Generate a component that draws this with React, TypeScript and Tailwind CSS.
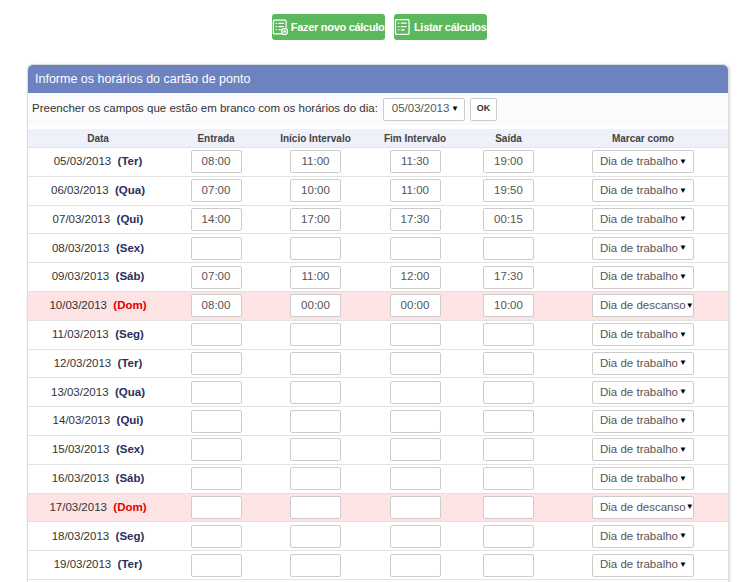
const rows: [string,string,string[],boolean][] = [
["05/03/2013","Ter",["08:00","11:00","11:30","19:00"],false],
["06/03/2013","Qua",["07:00","10:00","11:00","19:50"],false],
["07/03/2013","Qui",["14:00","17:00","17:30","00:15"],false],
["08/03/2013","Sex",["","","",""],false],
["09/03/2013","Sáb",["07:00","11:00","12:00","17:30"],false],
["10/03/2013","Dom",["08:00","00:00","00:00","10:00"],true],
["11/03/2013","Seg",["","","",""],false],
["12/03/2013","Ter",["","","",""],false],
["13/03/2013","Qua",["","","",""],false],
["14/03/2013","Qui",["","","",""],false],
["15/03/2013","Sex",["","","",""],false],
["16/03/2013","Sáb",["","","",""],false],
["17/03/2013","Dom",["","","",""],true],
["18/03/2013","Seg",["","","",""],false],
["19/03/2013","Ter",["","","",""],false],
["20/03/2013","Qua",["","","",""],false],
];
const cols = "grid grid-cols-[140px_96px_103px_96px_91px_178px]";
function Box({v}:{v:string}){return <div className="mx-auto w-[51px] h-[23px] border border-[#ccc] rounded-[2px] bg-white text-[11.5px] text-[#555] flex items-center justify-center">{v}</div>;}
function Sel({v,w}:{v:string,w:string}){return <div className={`mx-auto ${w} h-[23px] border border-[#ccc] rounded-[2px] bg-white text-[11.5px] text-[#555] flex items-center justify-between pl-[7px] pr-[6px] whitespace-nowrap`}><span>{v}</span><span className="text-[8px] text-black">▼</span></div>;}
function ListIcon({plus}:{plus?:boolean}){return <svg width="18" height="18" viewBox="0 0 18 18" fill="none" stroke="white" strokeWidth="1.3"><rect x="1.5" y="1.5" width="14" height="15" rx="1"/><path d="M4 5h1.5M7 5h6M4 8.5h1.5M7 8.5h6M4 12h1.5M7 12h4"/>{plus&&<><circle cx="14" cy="14" r="3.3" fill="#5cb85c"/><path d="M14 12.3v3.4M12.3 14h3.4"/></>}</svg>;}
export default function App(){return <div className="w-[750px] h-[582px] overflow-hidden bg-white" style={{fontFamily:'"Liberation Sans",Arial,sans-serif'}}>
<div className="flex justify-center gap-[9px] pt-[14px] pl-[8px]">
<div className="h-[26px] w-[113px] justify-center bg-[#5cb85c] rounded-[3px] flex items-center gap-[3px] text-white text-[11px] font-bold tracking-[-0.3px] whitespace-nowrap"><ListIcon plus/>Fazer novo cálculo</div>
<div className="h-[26px] w-[93px] justify-center bg-[#5cb85c] rounded-[3px] flex items-center gap-[3px] text-white text-[11px] font-bold tracking-[-0.3px] whitespace-nowrap"><ListIcon/>Listar cálculos</div>
</div>
<div className="ml-[27px] mt-[24px] w-[702px] border border-[#ddd] rounded-t-[5px] shadow-[1px_1px_3px_rgba(0,0,0,0.15)]">
<div className="h-[28px] bg-[#6d82c0] rounded-t-[5px] text-white text-[12.5px] flex items-center pl-[7px]">Informe os horários do cartão de ponto</div>
<div className="h-[32px] flex items-center pl-[4px] gap-[5px] text-[11.5px] text-[#333] bg-[#fbfbfd] whitespace-nowrap">Preencher os campos que estão em branco com os horários do dia:<div className="w-[82px] h-[23px] border border-[#ccc] rounded-[2px] bg-white flex items-center justify-between pl-[8px] pr-[5px] text-[#555]"><span>05/03/2013</span><span className="text-[8px] text-black">▼</span></div><div className="h-[23px] px-[6px] border border-[#ccc] rounded-[2px] bg-white flex items-center text-[9px] font-bold">OK</div></div>
<div className={`${cols} h-[18px] bg-[#eef0fa] text-[10px] font-bold text-[#444] items-center text-center mt-[4px]`}><span>Data</span><span>Entrada</span><span>Início Intervalo</span><span>Fim Intervalo</span><span>Saída</span><span>Marcar como</span></div>
{rows.map(([d,w,t,dom])=> <div key={d} className={`${cols} h-[28.8px] items-center border-t border-[#e2e2e2] ${dom?"bg-[#fde3e3]":""}`}>
<span className="text-center text-[11.5px] text-[#333] whitespace-nowrap">{d}&nbsp;&nbsp;<b className={dom?"text-[#e00000]":"text-[#2a2f5a]"}>({w})</b></span>
{t.map((v,i)=><Box key={i} v={v}/>)}
<Sel v={dom?"Dia de descanso":"Dia de trabalho"} w="w-[102px]"/>
</div>)}
</div></div>;}
